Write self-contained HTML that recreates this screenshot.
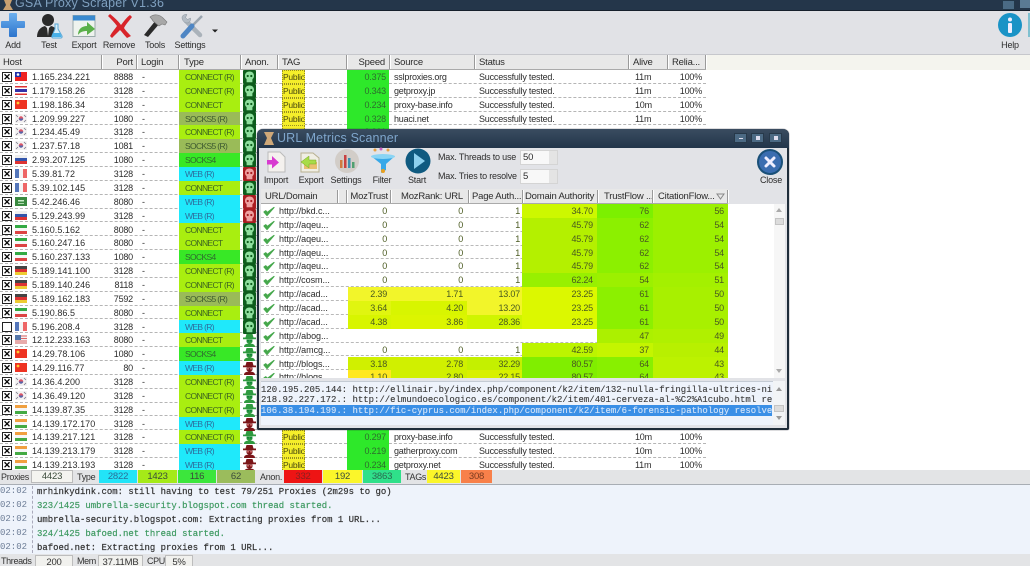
<!DOCTYPE html>
<html><head><meta charset="utf-8"><title>GSA Proxy Scraper</title>
<style>
html,body{margin:0;padding:0;width:1030px;height:566px;overflow:hidden;background:#fff}
#root{position:absolute;left:0;top:0;width:1030px;height:566px;overflow:hidden;font:9px/14px "Liberation Sans",sans-serif;letter-spacing:-.2px;color:#2c2c2c;filter:blur(.3px)}
#root div,#root b,#root i,#root svg{position:absolute;font-weight:normal;font-style:normal;white-space:nowrap}
.lb{text-align:center;width:50px;top:38px;font-size:9px}
.hd{top:55px;height:15px;line-height:16px;font-size:9.5px}
.sp{top:55px;width:1px;height:14px;background:#9a9a9a;border-right:1px solid #fff}
#grid{left:0;top:70px;width:706px;height:400px;overflow:hidden}
.r{left:0;width:706px;height:13.86px;line-height:15px;border-bottom:1px dashed #b5b5b5;box-sizing:border-box}
.cb{left:2px;top:2px;width:8px;height:8px;border:1px solid #222;background:#fff;font-size:9px;line-height:8px;text-align:center;letter-spacing:0;color:#000;-webkit-text-stroke:.4px #000}
.f{left:15px;top:2px;width:12px;height:9px}
.h{left:32px;letter-spacing:.05px}.p{left:100px;width:33px;text-align:right}.l{left:142px}
.t{left:179px;width:61px;top:0;height:14px;padding-left:6px;box-sizing:border-box;font-size:8.5px;letter-spacing:-.65px}
.c{background:#a9ee10;color:#3c6420}.s5{background:#9abb58;color:#3d5a30}.s4{background:#38e826;color:#2f6a2f}.w{background:#1fe9fb;color:#2d6d9c}
.a{left:243px;top:0;width:13px;height:14px}
.g{left:282px;width:23px;top:0;height:14px;background:#f5ee2a;box-sizing:border-box;border:1px dotted #998f20;line-height:13px;color:#4a4a10;overflow:hidden;font-size:8.5px;letter-spacing:-.25px}
.v{left:347px;width:42px;top:0;height:14px;background:#2ee82a;text-align:right;padding-right:3px;box-sizing:border-box;color:#2d6d2d}
.so{left:394px}.st{left:479px}.al{left:635px}.re{left:660px;width:42px;text-align:right}
.bar{top:470px;height:13px;line-height:14px;text-align:center;font-size:9.5px;color:#3b4b3b}
.bl{top:470px;height:13px;line-height:14px;font-size:9px;letter-spacing:-.3px;color:#333}
.tm{left:0;color:#6f7f98;font:9px/14px "Liberation Mono",monospace;letter-spacing:0}
.lg{left:37px;font:8.96px/14px "Liberation Mono",monospace;letter-spacing:0;color:#333;-webkit-text-stroke:.2px #333}
.gr{color:#3f9a62;-webkit-text-stroke:.2px #3f9a62}
.bt{top:554px;height:12px;line-height:14px;font-size:9px;letter-spacing:-.35px;color:#333}
.bx{top:555px;height:11px;line-height:13px;font-size:9.5px;background:#f1f1ee;text-align:center;border:1px solid #bdbdbd;border-bottom:0;box-sizing:border-box;color:#333}
.dl{top:174px;width:40px;text-align:center;font-size:9px;line-height:13px}
.dh{top:189px;height:15px;line-height:16px;font-size:9.5px}
.ds{top:190px;width:1px;height:13px;background:#9a9a9a;border-right:1px solid #fff}
#ul{left:261px;top:204px;width:513px;height:174px;overflow:hidden;background:#fff}
.u{left:0;width:467px;height:13.86px;line-height:15.5px;border-bottom:1px dashed #b9b9b9;box-sizing:border-box}
.ck{left:2px;top:2px;width:12px;height:11px}
.ut{left:18px;letter-spacing:-.05px}
.n{height:14px;top:0;text-align:right;padding-right:4px;box-sizing:border-box;color:#4a5a20}
.m{left:87px;width:43px}.mr{left:130px;width:76px}.pa{left:206px;width:55px;padding-right:2px}.da{left:261px;width:75px}.tf{left:336px;width:56px}.cf{left:392px;width:75px}
.ll{left:261px;font:8.98px/11px "Liberation Mono",monospace;letter-spacing:0;color:#3a3a3a;width:511px;overflow:hidden;-webkit-text-stroke:.12px #3a3a3a}
</style></head><body>
<div id="root">
<svg style="width:0;height:0;left:0;top:0">
<defs>
<symbol id="tw" viewBox="0 0 12 9"><rect width="12" height="9" fill="#e22"/><rect width="6" height="5" fill="#23a"/><circle cx="3" cy="2.5" r="1.3" fill="#fff"/></symbol>
<symbol id="th" viewBox="0 0 12 9"><rect width="12" height="9" fill="#d33"/><rect y="1.5" width="12" height="6" fill="#fff"/><rect y="3" width="12" height="3" fill="#33a"/></symbol>
<symbol id="cn" viewBox="0 0 12 9"><rect width="12" height="9" fill="#e32"/><circle cx="3" cy="3" r="1.4" fill="#fc3"/></symbol>
<symbol id="kr" viewBox="0 0 12 9"><rect width="12" height="9" fill="#f4f2f2"/><circle cx="6" cy="4.5" r="2.2" fill="#d56"/><path d="M3.800 4.500a2.200 2.200 0 0 0 4.400 0z" fill="#56a"/><path d="M1 1l2 2M9 1l2 2M1 8l2-2M9 8l2-2" stroke="#778" stroke-width=".8"/></symbol>
<symbol id="ru" viewBox="0 0 12 9"><rect width="12" height="3" fill="#eee"/><rect y="3" width="12" height="3" fill="#35a"/><rect y="6" width="12" height="3" fill="#d33"/></symbol>
<symbol id="fr" viewBox="0 0 12 9"><rect width="4" height="9" fill="#57b"/><rect x="4" width="4" height="9" fill="#f4f4f4"/><rect x="8" width="4" height="9" fill="#e66"/></symbol>
<symbol id="sa" viewBox="0 0 12 9"><rect width="12" height="9" fill="#3a8a40"/><rect x="3" y="3" width="6" height="1.5" fill="#cec"/><rect x="3" y="6" width="6" height=".8" fill="#cec"/></symbol>
<symbol id="ir" viewBox="0 0 12 9"><rect width="12" height="3" fill="#3a4"/><rect y="3" width="12" height="3" fill="#f6f6f6"/><rect y="6" width="12" height="3" fill="#d44"/></symbol>
<symbol id="de" viewBox="0 0 12 9"><rect width="12" height="3" fill="#444"/><rect y="3" width="12" height="3" fill="#d33"/><rect y="6" width="12" height="3" fill="#ec3"/></symbol>
<symbol id="us" viewBox="0 0 12 9"><rect width="12" height="9" fill="#f3f0f0"/><path d="M0 1h12M0 3.500h12M0 6h12M0 8h12" stroke="#d66" stroke-width="1.1"/><rect width="6" height="5" fill="#57a"/></symbol>
<symbol id="in" viewBox="0 0 12 9"><rect width="12" height="3" fill="#f0a040"/><rect y="3" width="12" height="3" fill="#f6f6f6"/><rect y="6" width="12" height="3" fill="#4a4"/></symbol>
<symbol id="sg" viewBox="0 0 13 14"><rect width="13" height="14" rx="1" fill="#0d5c1c"/><path d="M6.500 1.500c3.200 0 4.500 2 4.500 4.500 0 1.700-.9 2.600-1.600 3.200v3H3.600v-3C2.900 8.600 2 7.700 2 6 2 3.500 3.300 1.500 6.500 1.500z" fill="#8fdf9e"/><circle cx="4.700" cy="6" r="1.100" fill="#0d5c1c"/><circle cx="8.300" cy="6" r="1.100" fill="#0d5c1c"/></symbol>
<symbol id="sr" viewBox="0 0 13 14"><rect width="13" height="14" rx="1" fill="#a81c20"/><path d="M6.500 1.500c3.200 0 4.500 2 4.500 4.500 0 1.700-.9 2.600-1.600 3.200v3H3.600v-3C2.900 8.600 2 7.700 2 6 2 3.500 3.300 1.500 6.500 1.500z" fill="#f0a0a0"/><circle cx="4.700" cy="6" r="1.100" fill="#a81c20"/><circle cx="8.300" cy="6" r="1.100" fill="#a81c20"/></symbol>
<symbol id="pg" viewBox="0 0 13 14"><path d="M3.500 1h6l1 3.500h2.500v1.700H0V4.500h2.500zM3.500 6.500h6v2c0 1.200-1.300 2-3 2s-3-.8-3-2zM1 14c0-2.500 2-3.500 5.500-3.500s5.500 1 5.500 3.500z" fill="#2f9a40"/><circle cx="5" cy="7.800" r=".8" fill="#073"/><circle cx="8" cy="7.800" r=".8" fill="#073"/></symbol>
<symbol id="pr" viewBox="0 0 13 14"><path d="M3.500 1h6l1 3.500h2.500v1.700H0V4.500h2.500zM3.500 6.500h6v2c0 1.200-1.300 2-3 2s-3-.8-3-2zM1 14c0-2.500 2-3.500 5.500-3.500s5.500 1 5.500 3.500z" fill="#7a1518"/><circle cx="5" cy="7.800" r=".8" fill="#e88"/><circle cx="8" cy="7.800" r=".8" fill="#e88"/></symbol>
<symbol id="ok" viewBox="0 0 12 11"><path d="M1 6l3 3.500L11 1.500 4.300 6.500 2.800 4.800z" fill="#46a84c" stroke="#46a84c" stroke-width="1.200" stroke-linejoin="round"/></symbol>
</defs>
</svg>

<!-- title bar -->
<div style="left:0;top:0;width:1030px;height:10px;background:#24364a;border-bottom:1px solid #16202c"></div>
<svg style="left:3px;top:0;width:10px;height:10px"><path d="M1 0h8l-2 5 3 5H0l3-5z" fill="#c8a070"/></svg>
<div style="left:15px;top:-4px;font-size:12.5px;line-height:14px;color:#7fa0bf;letter-spacing:.2px">GSA Proxy Scraper V1.36</div>
<div style="left:1002px;top:0;width:11px;height:8px;background:#4a6a84;border:1px solid #23384a"></div>
<div style="left:1020px;top:0;width:10px;height:8px;background:#5a7a94"></div>

<!-- toolbar -->
<div style="left:0;top:11px;width:1030px;height:43px;background:#e1e2e6;border-bottom:1px solid #c6c7cc"></div>
<svg style="left:0;top:11px;width:225px;height:28px" viewBox="0 11 225 28">
<defs><linearGradient id="bl" x1="0" y1="0" x2="0" y2="1"><stop offset="0" stop-color="#6db0ee"/><stop offset="1" stop-color="#2c74cc"/></linearGradient></defs>
<path d="M10 13h6a1 1 0 0 1 1 1v7h7a1 1 0 0 1 1 1v5a1 1 0 0 1-1 1h-7v8a1 1 0 0 1-1 1h-6a1 1 0 0 1-1-1v-8H2a1 1 0 0 1-1-1v-5a1 1 0 0 1 1-1h7v-7a1 1 0 0 1 1-1z" fill="url(#bl)"/>
<circle cx="48" cy="20" r="6" fill="#2a2a2a"/><path d="M37 37c0-7 4-10 8-11l3 3 3-3c2 .5 3 1 4 2l-2 9z" fill="#2b2b2b"/><path d="M47 28l1 8 1-8z" fill="#ddd"/>
<path d="M55 24h3v5l4 7c.4 1-.2 2-1 2h-8c-1 0-1.400-1-1-2l3-7z" fill="#d8eef8" stroke="#58a8d8"/><path d="M53 33h7l1.500 4h-10z" fill="#48b0e8"/>
<rect x="73" y="15.500" width="22" height="21" fill="#eef3ee" stroke="#9aa"/><rect x="73" y="15.500" width="22" height="5" fill="#3a8ad0"/><path d="M78 35c0-6 4-9 9-9v-4l8 7-8 6v-4c-4 0-7 1-9 4z" fill="#5ab04a"/>
<path d="M110 14c6 5 9 8 11 11 3-4 6-8 9-10l2 2c-3 4-6 7-8 11 2 3 5 6 7 8l-4 2c-3-3-5-6-7-8-3 3-5 5-8 8l-2-2c2-4 5-7 7-10-3-4-6-7-9-10z" fill="#d8242a"/>
<path d="M144 35l12-15 4 3-12 14z" fill="#2a2a2a"/><path d="M150 17c4-3 9-3 13 1l4 4-2 3-3-1-3 2-6-5c-1-2-2-3-3-4z" fill="#a8a8a8" stroke="#777" stroke-width=".6"/>
<path d="M186 21l14 14" stroke="#aab2ba" stroke-width="4.500" stroke-linecap="round"/>
<path d="M182 17.500c0-2 2.500-3.500 5-3l-1.500 3 2 2 3-1.500c.5 2.500-1 5-3.500 5-3 0-5-3-5-5.500z" fill="#b4bcc4" stroke="#8a949e" stroke-width=".5"/>
<path d="M202 16l-11 11" stroke="#9aa4ae" stroke-width="2.500"/>
<path d="M192 26l-9 10" stroke="#4f86c4" stroke-width="5" stroke-linecap="round"/>
<path d="M212 29.500h6l-3 3z" fill="#222"/>
</svg>
<div class="lb" style="left:-12px">Add</div><div class="lb" style="left:24px">Test</div><div class="lb" style="left:59px">Export</div><div class="lb" style="left:94px">Remove</div><div class="lb" style="left:130px">Tools</div><div class="lb" style="left:165px">Settings</div>
<svg style="left:997px;top:12px;width:26px;height:26px"><circle cx="13" cy="13" r="12" fill="#1a93c6"/><circle cx="13" cy="7.500" r="2" fill="#eef"/><rect x="11" y="11" width="4" height="10" rx="1" fill="#eef"/></svg>
<div class="lb" style="left:985px">Help</div>
<div style="left:1028px;top:13px;width:2px;height:24px;background:#7fc0d0"></div>

<!-- grid header -->
<div style="left:0;top:55px;width:706px;height:15px;background:#e8e8e8;border-bottom:1px solid #aaa;box-sizing:border-box"></div>
<div style="left:706px;top:55px;width:324px;height:15px;background:#f4f4ee"></div>
<div class="hd" style="left:3px">Host</div><div class="sp" style="left:101px"></div>
<div class="hd" style="left:100px;width:33px;text-align:right">Port</div><div class="sp" style="left:136px"></div>
<div class="hd" style="left:141px">Login</div><div class="sp" style="left:178px"></div>
<div class="hd" style="left:184px">Type</div><div class="sp" style="left:240px"></div>
<div class="hd" style="left:245px">Anon.</div><div class="sp" style="left:277px"></div>
<div class="hd" style="left:282px">TAG</div><div class="sp" style="left:346px"></div>
<div class="hd" style="left:345px;width:40px;text-align:right">Speed</div><div class="sp" style="left:389px"></div>
<div class="hd" style="left:394px">Source</div><div class="sp" style="left:474px"></div>
<div class="hd" style="left:479px">Status</div><div class="sp" style="left:628px"></div>
<div class="hd" style="left:633px">Alive</div><div class="sp" style="left:667px"></div>
<div class="hd" style="left:672px">Relia...</div><div class="sp" style="left:705px"></div>

<!-- grid rows -->
<div id="grid">
<div class="r" style="top:0"><i class="cb">✕</i><svg class="f"><use href="#tw"/></svg><b class="h">1.165.234.221</b><b class="p">8888</b><b class="l">-</b><b class="t c">CONNECT (R)</b><svg class="a"><use href="#sg"/></svg><b class="g">Public</b><b class="v">0.375</b><b class="so">sslproxies.org</b><b class="st">Successfully tested.</b><b class="al">11m</b><b class="re">100%</b></div>
<div class="r" style="top:13.9px"><i class="cb">✕</i><svg class="f"><use href="#th"/></svg><b class="h">1.179.158.26</b><b class="p">3128</b><b class="l">-</b><b class="t c">CONNECT (R)</b><svg class="a"><use href="#sg"/></svg><b class="g">Public</b><b class="v">0.343</b><b class="so">getproxy.jp</b><b class="st">Successfully tested.</b><b class="al">11m</b><b class="re">100%</b></div>
<div class="r" style="top:27.7px"><i class="cb">✕</i><svg class="f"><use href="#cn"/></svg><b class="h">1.198.186.34</b><b class="p">3128</b><b class="l">-</b><b class="t c">CONNECT</b><svg class="a"><use href="#sg"/></svg><b class="g">Public</b><b class="v">0.234</b><b class="so">proxy-base.info</b><b class="st">Successfully tested.</b><b class="al">10m</b><b class="re">100%</b></div>
<div class="r" style="top:41.6px"><i class="cb">✕</i><svg class="f"><use href="#kr"/></svg><b class="h">1.209.99.227</b><b class="p">1080</b><b class="l">-</b><b class="t s5">SOCKS5 (R)</b><svg class="a"><use href="#sg"/></svg><b class="g">Public</b><b class="v">0.328</b><b class="so">huaci.net</b><b class="st">Successfully tested.</b><b class="al">11m</b><b class="re">100%</b></div>
<div class="r" style="top:55.4px"><i class="cb">✕</i><svg class="f"><use href="#kr"/></svg><b class="h">1.234.45.49</b><b class="p">3128</b><b class="l">-</b><b class="t c">CONNECT (R)</b><svg class="a"><use href="#sg"/></svg><b class="g">Public</b><b class="v">0.301</b></div>
<div class="r" style="top:69.3px"><i class="cb">✕</i><svg class="f"><use href="#kr"/></svg><b class="h">1.237.57.18</b><b class="p">1081</b><b class="l">-</b><b class="t s5">SOCKS5 (R)</b><svg class="a"><use href="#sg"/></svg></div>
<div class="r" style="top:83.2px"><i class="cb">✕</i><svg class="f"><use href="#ru"/></svg><b class="h">2.93.207.125</b><b class="p">1080</b><b class="l">-</b><b class="t s4">SOCKS4</b><svg class="a"><use href="#sg"/></svg></div>
<div class="r" style="top:97px"><i class="cb">✕</i><svg class="f"><use href="#fr"/></svg><b class="h">5.39.81.72</b><b class="p">3128</b><b class="l">-</b><b class="t w">WEB (R)</b><svg class="a"><use href="#sr"/></svg></div>
<div class="r" style="top:110.9px"><i class="cb">✕</i><svg class="f"><use href="#fr"/></svg><b class="h">5.39.102.145</b><b class="p">3128</b><b class="l">-</b><b class="t c">CONNECT</b><svg class="a"><use href="#sg"/></svg></div>
<div class="r" style="top:124.7px"><i class="cb">✕</i><svg class="f"><use href="#sa"/></svg><b class="h">5.42.246.46</b><b class="p">8080</b><b class="l">-</b><b class="t w">WEB (R)</b><svg class="a"><use href="#sr"/></svg></div>
<div class="r" style="top:138.6px"><i class="cb">✕</i><svg class="f"><use href="#ru"/></svg><b class="h">5.129.243.99</b><b class="p">3128</b><b class="l">-</b><b class="t w">WEB (R)</b><svg class="a"><use href="#sr"/></svg></div>
<div class="r" style="top:152.5px"><i class="cb">✕</i><svg class="f"><use href="#ir"/></svg><b class="h">5.160.5.162</b><b class="p">8080</b><b class="l">-</b><b class="t c">CONNECT</b><svg class="a"><use href="#sg"/></svg></div>
<div class="r" style="top:166.3px"><i class="cb">✕</i><svg class="f"><use href="#ir"/></svg><b class="h">5.160.247.16</b><b class="p">8080</b><b class="l">-</b><b class="t c">CONNECT</b><svg class="a"><use href="#sg"/></svg></div>
<div class="r" style="top:180.2px"><i class="cb">✕</i><svg class="f"><use href="#ir"/></svg><b class="h">5.160.237.133</b><b class="p">1080</b><b class="l">-</b><b class="t s4">SOCKS4</b><svg class="a"><use href="#sg"/></svg></div>
<div class="r" style="top:194px"><i class="cb">✕</i><svg class="f"><use href="#de"/></svg><b class="h">5.189.141.100</b><b class="p">3128</b><b class="l">-</b><b class="t c">CONNECT (R)</b><svg class="a"><use href="#sg"/></svg></div>
<div class="r" style="top:207.9px"><i class="cb">✕</i><svg class="f"><use href="#de"/></svg><b class="h">5.189.140.246</b><b class="p">8118</b><b class="l">-</b><b class="t c">CONNECT (R)</b><svg class="a"><use href="#sg"/></svg></div>
<div class="r" style="top:221.8px"><i class="cb">✕</i><svg class="f"><use href="#de"/></svg><b class="h">5.189.162.183</b><b class="p">7592</b><b class="l">-</b><b class="t s5">SOCKS5 (R)</b><svg class="a"><use href="#sg"/></svg></div>
<div class="r" style="top:235.6px"><i class="cb">✕</i><svg class="f"><use href="#ir"/></svg><b class="h">5.190.86.5</b><b class="p">8080</b><b class="l">-</b><b class="t c">CONNECT</b><svg class="a"><use href="#sg"/></svg></div>
<div class="r" style="top:249.5px"><i class="cb"></i><svg class="f"><use href="#fr"/></svg><b class="h">5.196.208.4</b><b class="p">3128</b><b class="l">-</b><b class="t w">WEB (R)</b><svg class="a"><use href="#sg"/></svg></div>
<div class="r" style="top:263.3px"><i class="cb">✕</i><svg class="f"><use href="#us"/></svg><b class="h">12.12.233.163</b><b class="p">8080</b><b class="l">-</b><b class="t c">CONNECT</b><svg class="a"><use href="#pg"/></svg></div>
<div class="r" style="top:277.2px"><i class="cb">✕</i><svg class="f"><use href="#cn"/></svg><b class="h">14.29.78.106</b><b class="p">1080</b><b class="l">-</b><b class="t s4">SOCKS4</b><svg class="a"><use href="#pg"/></svg></div>
<div class="r" style="top:291.1px"><i class="cb">✕</i><svg class="f"><use href="#cn"/></svg><b class="h">14.29.116.77</b><b class="p">80</b><b class="l">-</b><b class="t w">WEB (R)</b><svg class="a"><use href="#pr"/></svg></div>
<div class="r" style="top:304.9px"><i class="cb">✕</i><svg class="f"><use href="#kr"/></svg><b class="h">14.36.4.200</b><b class="p">3128</b><b class="l">-</b><b class="t c">CONNECT (R)</b><svg class="a"><use href="#pg"/></svg></div>
<div class="r" style="top:318.8px"><i class="cb">✕</i><svg class="f"><use href="#kr"/></svg><b class="h">14.36.49.120</b><b class="p">3128</b><b class="l">-</b><b class="t c">CONNECT (R)</b><svg class="a"><use href="#pg"/></svg></div>
<div class="r" style="top:332.6px"><i class="cb">✕</i><svg class="f"><use href="#in"/></svg><b class="h">14.139.87.35</b><b class="p">3128</b><b class="l">-</b><b class="t c">CONNECT (R)</b><svg class="a"><use href="#pg"/></svg></div>
<div class="r" style="top:346.5px"><i class="cb">✕</i><svg class="f"><use href="#in"/></svg><b class="h">14.139.172.170</b><b class="p">3128</b><b class="l">-</b><b class="t w">WEB (R)</b><svg class="a"><use href="#pr"/></svg></div>
<div class="r" style="top:360.4px"><i class="cb">✕</i><svg class="f"><use href="#in"/></svg><b class="h">14.139.217.121</b><b class="p">3128</b><b class="l">-</b><b class="t c">CONNECT (R)</b><svg class="a"><use href="#pg"/></svg><b class="g">Public</b><b class="v">0.297</b><b class="so">proxy-base.info</b><b class="st">Successfully tested.</b><b class="al">10m</b><b class="re">100%</b></div>
<div class="r" style="top:374.2px"><i class="cb">✕</i><svg class="f"><use href="#in"/></svg><b class="h">14.139.213.179</b><b class="p">3128</b><b class="l">-</b><b class="t w">WEB (R)</b><svg class="a"><use href="#pr"/></svg><b class="g">Public</b><b class="v">0.219</b><b class="so">gatherproxy.com</b><b class="st">Successfully tested.</b><b class="al">10m</b><b class="re">100%</b></div>
<div class="r" style="top:388.1px"><i class="cb">✕</i><svg class="f"><use href="#in"/></svg><b class="h">14.139.213.193</b><b class="p">3128</b><b class="l">-</b><b class="t w">WEB (R)</b><svg class="a"><use href="#pr"/></svg><b class="g">Public</b><b class="v">0.234</b><b class="so">getproxy.net</b><b class="st">Successfully tested.</b><b class="al">11m</b><b class="re">100%</b></div>
</div>

<!-- status bar -->
<div style="left:0;top:470px;width:1030px;height:14px;background:#e3e4e6"></div>
<div class="bl" style="left:1px">Proxies</div><div class="bar" style="left:31px;width:42px;background:#f4f4f0;border:1px solid #bbb;box-sizing:border-box;line-height:12px">4423</div>
<div class="bl" style="left:77px">Type</div>
<div class="bar" style="left:99px;width:38px;background:#22e4f8;color:#2a6f98">2822</div>
<div class="bar" style="left:138px;width:39px;background:#a5ea18">1423</div>
<div class="bar" style="left:178px;width:38px;background:#3ce63c">116</div>
<div class="bar" style="left:217px;width:38px;background:#9bbc5c">62</div>
<div class="bl" style="left:260px">Anon.</div>
<div class="bar" style="left:284px;width:38px;background:#ee1414;color:#8a2020">332</div>
<div class="bar" style="left:323px;width:39px;background:#fbf62a">192</div>
<div class="bar" style="left:363px;width:38px;background:#2fe08a;color:#2a6a50">3863</div>
<div class="bl" style="left:405px">TAGs</div>
<div class="bar" style="left:427px;width:33px;background:#fbf62a">4423</div>
<div class="bar" style="left:461px;width:31px;background:#f8804a;color:#7a3a20">308</div>

<!-- log -->
<div style="left:0;top:484px;width:1030px;height:70px;background:#eef3fb;border-top:1px solid #a8adb4;box-sizing:border-box"></div>
<div style="left:32px;top:486px;width:0;height:67px;border-left:1px dashed #aab"></div>
<div class="tm" style="top:484px">02:02</div><div class="lg" style="top:484.500px">mrhinkydink.com: still having to test 79/251 Proxies (2m29s to go)</div>
<div class="tm" style="top:498px">02:02</div><div class="lg gr" style="top:498.500px">323/1425 umbrella-security.blogspot.com thread started.</div>
<div class="tm" style="top:512px">02:02</div><div class="lg" style="top:513px">umbrella-security.blogspot.com: Extracting proxies from 1 URL...</div>
<div class="tm" style="top:526px">02:02</div><div class="lg gr" style="top:527px">324/1425 bafoed.net thread started.</div>
<div class="tm" style="top:540px">02:02</div><div class="lg" style="top:541px">bafoed.net: Extracting proxies from 1 URL...</div>

<!-- bottom -->
<div style="left:0;top:554px;width:1030px;height:12px;background:#e3e4e6"></div>
<div class="bt" style="left:1px">Threads</div><div class="bx" style="left:35px;width:38px">200</div>
<div class="bt" style="left:77px">Mem</div><div class="bx" style="left:98px;width:45px">37.11MB</div>
<div class="bt" style="left:147px">CPU</div><div class="bx" style="left:165px;width:28px">5%</div>

<!-- dialog -->
<div style="left:257px;top:129px;width:532px;height:301px;background:#e2e3e7;border:2px solid #1f2d3a;border-top:0;border-radius:6px 6px 2px 2px;box-sizing:border-box;box-shadow:0 0 1px #223"></div>
<div style="left:257px;top:129px;width:532px;height:19px;background:linear-gradient(#3a4c60,#22354a);border-radius:6px 6px 0 0"></div>
<svg style="left:263px;top:131px;width:12px;height:15px"><path d="M1 1h10l-3 6 3 7H1l3-7z" fill="#cfa878"/></svg>
<div style="left:277px;top:130px;font-size:12.5px;line-height:16px;color:#7fa6cc;letter-spacing:.15px">URL Metrics Scanner</div>
<div style="left:734px;top:133px;width:13px;height:10px;background:#4c6a84;border:1px solid #27394a;box-sizing:border-box"></div>
<div style="left:751px;top:133px;width:13px;height:10px;background:#4c6a84;border:1px solid #27394a;box-sizing:border-box"></div>
<div style="left:769px;top:133px;width:13px;height:10px;background:#4c6a84;border:1px solid #27394a;box-sizing:border-box"></div>
<div style="left:739px;top:138px;width:4px;height:1px;background:#dde"></div>
<div style="left:756px;top:136px;width:4px;height:4px;background:#dde"></div>
<div style="left:774px;top:136px;width:4px;height:4px;background:#dde"></div>

<svg style="left:262px;top:147px;width:170px;height:28px" viewBox="262 147 170 28">
<path d="M268 152h12l5 5v15h-17z" fill="#f4f1ee" stroke="#bbb"/>
<path d="M267 160h5v-4l7 6.500-7 6v-4h-5z" fill="#d83ad0"/>
<path d="M301 153h12l6 5v14h-18z" fill="#f0eee4" stroke="#b8b090"/><rect x="304" y="162" width="13" height="7" fill="#e8c070"/>
<path d="M316 160h-7v-4l-8 6 8 6v-4h7z" fill="#a8dc48" stroke="#78a828" stroke-width=".5"/>
<circle cx="347" cy="161" r="12" fill="#d2cdc8"/><rect x="340" y="160" width="2.500" height="8" fill="#d07a40"/><rect x="344" y="155" width="2.500" height="13" fill="#c84040"/><rect x="348" y="158" width="2.500" height="10" fill="#4090b0"/><rect x="352" y="162" width="2.500" height="6" fill="#50a070"/>
<path d="M371 156h24l-9 8v6l-5 3v-9z" fill="#38a8e8"/><ellipse cx="383" cy="156.500" rx="12" ry="2.500" fill="#8ad4f4"/>
<circle cx="375" cy="150" r="1.500" fill="#e8a040"/><circle cx="381" cy="149" r="1.500" fill="#c860c0"/><circle cx="388" cy="150" r="1.500" fill="#e8a040"/><circle cx="383" cy="171" r="2" fill="#e8a020"/>
<circle cx="418" cy="161" r="12.500" fill="#0f5a80"/><path d="M414 153l11 8-11 8z" fill="#8cd0ee"/>
</svg>
<div class="dl" style="left:256px">Import</div><div class="dl" style="left:291px">Export</div><div class="dl" style="left:326px">Settings</div><div class="dl" style="left:362px">Filter</div><div class="dl" style="left:397px">Start</div>
<div style="left:438px;top:150px;font-size:9px;line-height:14px">Max. Threads to use</div>
<div style="left:438px;top:169px;font-size:9px;line-height:14px">Max. Tries to resolve</div>
<div style="left:520px;top:150px;width:38px;height:15px;background:#f8f8f8;border:1px solid #d4d4d4;box-sizing:border-box;line-height:13px;padding-left:2px;font-size:9.5px">50</div>
<div style="left:520px;top:169px;width:38px;height:15px;background:#f8f8f8;border:1px solid #d4d4d4;box-sizing:border-box;line-height:13px;padding-left:2px;font-size:9.5px">5</div>
<div style="left:549px;top:151px;width:8px;height:13px;background:#e4e4e4"></div>
<div style="left:549px;top:170px;width:8px;height:13px;background:#e4e4e4"></div>
<svg style="left:757px;top:149px;width:26px;height:26px"><circle cx="13" cy="13" r="12" fill="#3a6db0" stroke="#1a5078" stroke-width="2"/><path d="M9 9l8 8M17 9l-8 8" stroke="#eef" stroke-width="3" stroke-linecap="round"/></svg>
<div class="dl" style="left:751px">Close</div>

<div style="left:261px;top:189px;width:467px;height:15px;background:#e8e8e8;border-bottom:1px solid #aaa;box-sizing:border-box"></div>
<div class="dh" style="left:265px">URL/Domain</div><div class="ds" style="left:337px"></div><div class="ds" style="left:346px"></div>
<div class="dh" style="left:350px;width:38px;text-align:right">MozTrust</div><div class="ds" style="left:390px"></div>
<div class="dh" style="left:395px;width:68px;text-align:right">MozRank: URL</div><div class="ds" style="left:468px"></div>
<div class="dh" style="left:472px">Page Auth...</div><div class="ds" style="left:522px"></div>
<div class="dh" style="left:525px;width:68px;text-align:right">Domain Authority</div><div class="ds" style="left:597px"></div>
<div class="dh" style="left:604px">TrustFlow ...</div><div class="ds" style="left:652px"></div>
<div class="dh" style="left:658px">CitationFlow...</div><div class="ds" style="left:727px"></div>
<svg style="left:716px;top:193px;width:9px;height:7px"><path d="M1 1h7L4.500 6z" fill="none" stroke="#888"/></svg>

<div id="ul">
<div class="u" style="top:0"><svg class="ck"><use href="#ok"/></svg><b class="ut">http://bkd.c...</b><b class="n m">0</b><b class="n mr">0</b><b class="n pa">1</b><b class="n da" style="background:#cdf800">34.70</b><b class="n tf" style="background:#7cf000">76</b><b class="n cf" style="background:#9cf000">56</b></div>
<div class="u" style="top:13.9px"><svg class="ck"><use href="#ok"/></svg><b class="ut">http://aqeu...</b><b class="n m">0</b><b class="n mr">0</b><b class="n pa">1</b><b class="n da" style="background:#b4f000">45.79</b><b class="n tf" style="background:#8cf000">62</b><b class="n cf" style="background:#9cf000">54</b></div>
<div class="u" style="top:27.7px"><svg class="ck"><use href="#ok"/></svg><b class="ut">http://aqeu...</b><b class="n m">0</b><b class="n mr">0</b><b class="n pa">1</b><b class="n da" style="background:#b4f000">45.79</b><b class="n tf" style="background:#8cf000">62</b><b class="n cf" style="background:#9cf000">54</b></div>
<div class="u" style="top:41.6px"><svg class="ck"><use href="#ok"/></svg><b class="ut">http://aqeu...</b><b class="n m">0</b><b class="n mr">0</b><b class="n pa">1</b><b class="n da" style="background:#b4f000">45.79</b><b class="n tf" style="background:#8cf000">62</b><b class="n cf" style="background:#9cf000">54</b></div>
<div class="u" style="top:55.4px"><svg class="ck"><use href="#ok"/></svg><b class="ut">http://aqeu...</b><b class="n m">0</b><b class="n mr">0</b><b class="n pa">1</b><b class="n da" style="background:#b4f000">45.79</b><b class="n tf" style="background:#8cf000">62</b><b class="n cf" style="background:#9cf000">54</b></div>
<div class="u" style="top:69.3px"><svg class="ck"><use href="#ok"/></svg><b class="ut">http://cosm...</b><b class="n m">0</b><b class="n mr">0</b><b class="n pa">1</b><b class="n da" style="background:#98f000">62.24</b><b class="n tf" style="background:#9cf000">54</b><b class="n cf" style="background:#a4f000">51</b></div>
<div class="u" style="top:83.2px"><svg class="ck"><use href="#ok"/></svg><b class="ut">http://acad...</b><b class="n m" style="background:#f2f52a">2.39</b><b class="n mr" style="background:#f2f52a">1.71</b><b class="n pa" style="background:#f2f52a">13.07</b><b class="n da" style="background:#dcf800">23.25</b><b class="n tf" style="background:#8cf000">61</b><b class="n cf" style="background:#a8f000">50</b></div>
<div class="u" style="top:97px"><svg class="ck"><use href="#ok"/></svg><b class="ut">http://acad...</b><b class="n m" style="background:#e0f510">3.64</b><b class="n mr" style="background:#d8f500">4.20</b><b class="n pa" style="background:#f2f52a">13.20</b><b class="n da" style="background:#dcf800">23.25</b><b class="n tf" style="background:#8cf000">61</b><b class="n cf" style="background:#a8f000">50</b></div>
<div class="u" style="top:110.9px"><svg class="ck"><use href="#ok"/></svg><b class="ut">http://acad...</b><b class="n m" style="background:#d8f500">4.38</b><b class="n mr" style="background:#dcf500">3.86</b><b class="n pa" style="background:#d0f500">28.36</b><b class="n da" style="background:#dcf800">23.25</b><b class="n tf" style="background:#8cf000">61</b><b class="n cf" style="background:#a8f000">50</b></div>
<div class="u" style="top:124.7px"><svg class="ck"><use href="#ok"/></svg><b class="ut">http://abog...</b><b class="n tf" style="background:#acf000">47</b><b class="n cf" style="background:#b0f000">49</b></div>
<div class="u" style="top:138.6px"><svg class="ck"><use href="#ok"/></svg><b class="ut">http://amcg...</b><b class="n m">0</b><b class="n mr">0</b><b class="n pa">1</b><b class="n da" style="background:#bcf400">42.59</b><b class="n tf" style="background:#c4f500">37</b><b class="n cf" style="background:#b8f000">44</b></div>
<div class="u" style="top:152.5px"><svg class="ck"><use href="#ok"/></svg><b class="ut">http://blogs...</b><b class="n m" style="background:#d0f000">3.18</b><b class="n mr" style="background:#d0f000">2.78</b><b class="n pa" style="background:#c4f000">32.29</b><b class="n da" style="background:#80ee00">80.57</b><b class="n tf" style="background:#88f000">64</b><b class="n cf" style="background:#bcf200">43</b></div>
<div class="u" style="top:166.3px"><svg class="ck"><use href="#ok"/></svg><b class="ut">http://blogs...</b><b class="n m" style="background:#ffe820">1.10</b><b class="n mr" style="background:#d0f000">2.80</b><b class="n pa" style="background:#d8f000">22.15</b><b class="n da" style="background:#80ee00">80.57</b><b class="n tf" style="background:#88f000">64</b><b class="n cf" style="background:#bcf200">43</b></div>
</div>
<!-- list scrollbar -->
<div style="left:774px;top:204px;width:11px;height:174px;background:#f6f6f6"></div>
<div style="left:775px;top:218px;width:9px;height:7px;background:#dcdcdc;border:1px solid #c4c4c4;box-sizing:border-box"></div>
<svg style="left:776px;top:208px;width:6px;height:5px"><path d="M0 4h6L3 0z" fill="#aaa"/></svg>
<svg style="left:776px;top:369px;width:6px;height:5px"><path d="M0 0h6L3 4z" fill="#aaa"/></svg>

<!-- dialog log -->
<div style="left:261px;top:381px;width:524px;height:44px;background:#eef3fb;border-top:1px solid #c4cbd4;box-sizing:border-box"></div>
<div style="left:261px;top:405px;width:511px;height:11px;background:#3a8fe6"></div>
<div class="ll" style="top:384.500px">120.195.205.144: http://ellinair.by/index.php/component/k2/item/132-nulla-fringilla-ultrices-ni</div>
<div class="ll" style="top:395px">218.92.227.172.: http://elmundoecologico.es/component/k2/item/401-cerveza-al-%C2%A1cubo.html re</div>
<div class="ll" style="top:405.500px;color:#d4e4f8;-webkit-text-stroke:.12px #d4e4f8">106.38.194.199.: http://fic-cyprus.com/index.php/component/k2/item/6-forensic-pathology resolve</div>
<div style="left:773px;top:381px;width:12px;height:44px;background:#f2f4f6"></div>
<div style="left:774px;top:405px;width:10px;height:7px;background:#dcdcdc;border:1px solid #c4c4c4;box-sizing:border-box"></div>
<svg style="left:776px;top:387px;width:6px;height:5px"><path d="M0 4h6L3 0z" fill="#999"/></svg>
<svg style="left:776px;top:416px;width:6px;height:5px"><path d="M0 0h6L3 4z" fill="#999"/></svg>
</div>
</body></html>
